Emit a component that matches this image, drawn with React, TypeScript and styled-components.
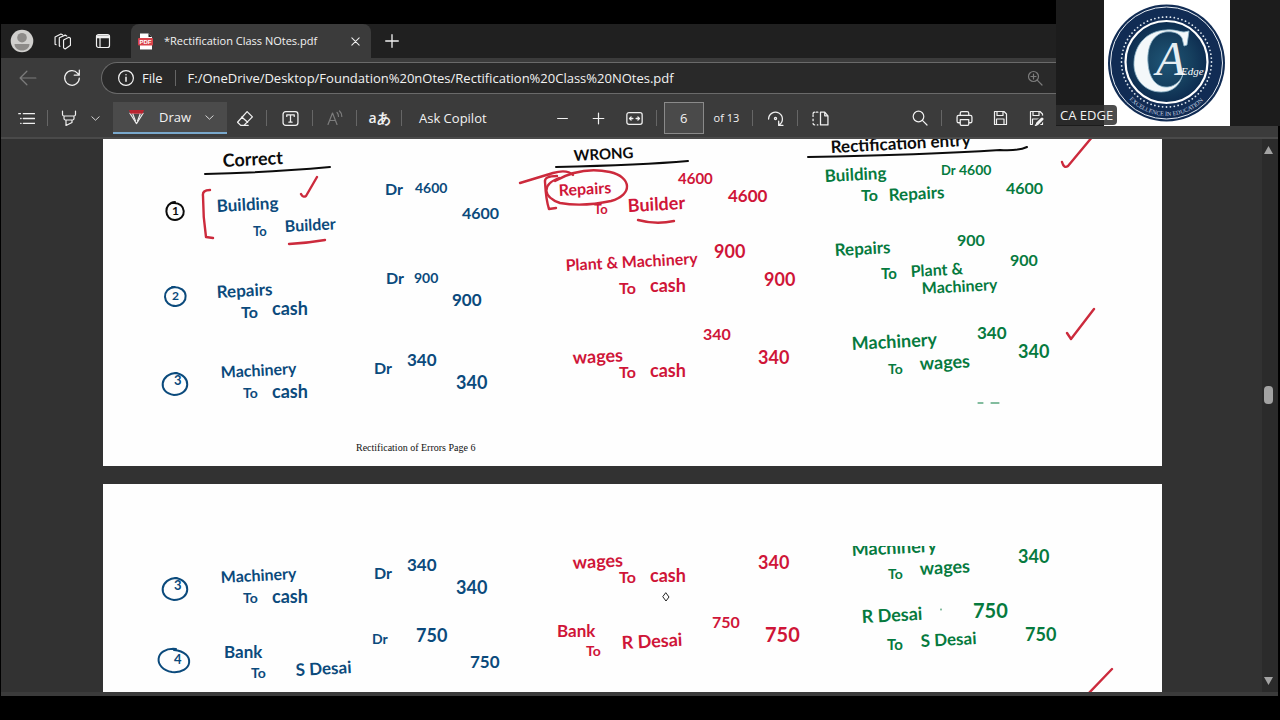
import React from "react";
import styled, { createGlobalStyle } from "styled-components";

const GlobalStyle = createGlobalStyle`
  * { box-sizing: border-box; }
  body {
    margin: 0;
    background: #000;
    color: #f2f2f2;
    font: 13px/20px "Open Sans", "Noto Sans", sans-serif;
  }
  button, input { font: inherit; color: inherit; }
  svg { flex: none; }
`;

const Screen = styled.div`
  position: relative;
  display: flex;
  flex-direction: column;
  height: 100vh;
  padding: 24px 2px 24px 1px;
  overflow: hidden;
`;

const TabBar = styled.header`
  display: flex;
  align-items: center;
  flex: none;
  height: 34px;
  background: #202020;
`;

const IconButton = styled.button<{ $w?: number; $dim?: boolean }>`
  display: flex;
  align-items: center;
  justify-content: center;
  flex: none;
  width: ${(p) => p.$w ?? 36}px;
  height: 32px;
  padding: 0;
  border: 0;
  background: none;
  color: ${(p) => (p.$dim ? "#7c7c7c" : "#f0f0f0")};
`;

const Tab = styled.div`
  display: flex;
  align-items: center;
  align-self: stretch;
  width: 240px;
  margin-left: 6px;
  padding-left: 6px;
  border-radius: 8px 8px 0 0;
  background: #3b3b3b;
`;

const TabTitle = styled.span`
  flex: 1;
  margin-left: 10px;
  font-size: 11px;
  white-space: nowrap;
`;

const AddressBar = styled.div`
  display: flex;
  align-items: center;
  flex: none;
  height: 40px;
  padding-left: 9px;
  background: #3b3b3b;
`;

const AddressPill = styled.div`
  display: flex;
  align-items: center;
  flex: 1;
  height: 32px;
  margin-left: 4px;
  padding: 0 235px 0 16px;
  border: 1px solid #6a6a6a;
  border-right: 0;
  border-radius: 16px 0 0 16px;
  background: #292929;
`;

const Scheme = styled.label`
  margin: 0 9px 0 8px;
`;

const UrlInput = styled.input`
  flex: 1;
  min-width: 0;
  margin-left: 8px;
  padding: 0;
  border: 0;
  background: none;
  outline: 0;
`;

const Toolbar = styled.div`
  display: flex;
  align-items: center;
  flex: none;
  height: 41px;
  padding: 1px 224px 0 7px;
  border-bottom: 2px solid #4a4a4a;
  background: #3b3b3b;
`;

const Divider = styled.span`
  flex: none;
  width: 1px;
  height: 16px;
  margin: 0 4px 0 3px;
  background: #666;
`;

const Spacer = styled.span<{ $grow: number }>`
  flex: ${(p) => p.$grow} 1 0;
`;

const DrawButton = styled.button`
  display: flex;
  align-items: center;
  justify-content: space-between;
  flex: none;
  width: 114px;
  height: 32px;
  margin-left: 9px;
  padding: 0 13px 0 15px;
  border: 0;
  border-bottom: 2px solid #79a8cc;
  background: #4b4b4b;
`;

const TextButton = styled.button`
  flex: none;
  width: 97px;
  padding: 0 0 0 13px;
  border: 0;
  background: none;
  text-align: left;
  white-space: nowrap;
`;

const Translate = styled.span`
  font-size: 14px;
  font-weight: 600;
`;

const PageInput = styled.input`
  flex: none;
  width: 40px;
  height: 32px;
  margin-left: 3px;
  padding: 0;
  border: 1px solid #8a8a8a;
  background: #4a4a4a;
  text-align: center;
`;

const PageCount = styled.label`
  flex: none;
  width: 45px;
  padding-left: 10px;
  font-size: 11px;
  white-space: nowrap;
`;

const Body = styled.main`
  display: flex;
  flex: 1;
  min-height: 0;
  border-bottom: 4px solid #3b3b3b;
`;

const Viewer = styled.div`
  flex: 1;
  min-width: 0;
  padding-left: 2px;
  overflow: hidden;
  background: #323232;
`;

const Sheet = styled.section`
  max-width: 1059px;
  margin: 0 auto 18px;
  background: #fefefe;
`;

const InkCanvas = styled.svg`
  display: block;
  width: 100%;
  height: auto;
  font-family: Lato, sans-serif;
  font-weight: 700;
`;

const SheetFooter = styled.footer`
  padding: 1px 0 10px 253px;
  color: #111;
  font: 10px/16px "Liberation Serif", serif;
`;

const ScrollTrack = styled.div`
  display: flex;
  flex-direction: column;
  align-items: center;
  justify-content: space-between;
  flex: none;
  width: 16px;
  padding: 7px 4px 7px 0;
  background: #2b2b2b;
`;

const ScrollThumb = styled.span`
  width: 9px;
  height: 18px;
  margin-bottom: 42px;
  border-radius: 4px;
  background: #a3a3a3;
`;

const Webcam = styled.aside`
  position: absolute;
  top: 0;
  right: 0;
  width: 224px;
  height: 126px;
  padding-left: 48px;
  background: #1c1c1c;
`;

const CamName = styled.span`
  position: absolute;
  left: 0;
  bottom: 1px;
  padding: 0 4px;
  border-radius: 0 4px 4px 0;
  background: rgba(45, 45, 45, 0.85);
`;

type Tone = "blue" | "red" | "green" | "black";
const ink: Record<Tone, string> = {
  blue: "#0b4a7c",
  red: "#cf1538",
  green: "#067a3e",
  black: "#0c0c0c",
};
const markRed = "#cc2a3c";

type Word = [text: string, x: number, y: number, size: number, tone: Tone];

const firstSheet: Word[] = [
  ["Correct", 120, 28, 18, "black"],
  ["WRONG", 471, 22, 15, "black"],
  ["Rectification entry", 728, 14, 17, "black"],

  ["1", 69, 76, 12, "black"],
  ["Building", 114, 73, 17, "blue"],
  ["To", 150, 97, 13, "blue"],
  ["Builder", 182, 93, 16, "blue"],
  ["Dr", 282, 56, 16, "blue"],
  ["4600", 312, 54, 14, "blue"],
  ["4600", 359, 80, 16, "blue"],
  ["Repairs", 456, 57, 16, "red"],
  ["4600", 575, 45, 15, "red"],
  ["To", 491, 75, 13, "red"],
  ["Builder", 525, 73, 18, "red"],
  ["4600", 625, 63, 17, "red"],
  ["Building", 722, 43, 17, "green"],
  ["Dr", 838, 36, 13, "green"],
  ["4600", 856, 36, 14, "green"],
  ["To", 758, 62, 16, "green"],
  ["Repairs", 786, 62, 17, "green"],
  ["4600", 903, 55, 16, "green"],

  ["2", 69, 161, 12, "blue"],
  ["Repairs", 114, 159, 17, "blue"],
  ["To", 138, 179, 16, "blue"],
  ["cash", 169, 176, 18, "blue"],
  ["Dr", 283, 145, 16, "blue"],
  ["900", 311, 144, 14, "blue"],
  ["900", 349, 167, 17, "blue"],
  ["Plant & Machinery", 463, 132, 16, "red"],
  ["900", 611, 119, 18, "red"],
  ["To", 516, 155, 16, "red"],
  ["cash", 547, 153, 18, "red"],
  ["900", 661, 147, 18, "red"],
  ["Repairs", 732, 117, 17, "green"],
  ["900", 854, 107, 16, "green"],
  ["To", 778, 140, 15, "green"],
  ["Plant &", 808, 138, 16, "green"],
  ["900", 907, 127, 16, "green"],
  ["Machinery", 819, 155, 16, "green"],

  ["3", 71, 246, 13, "blue"],
  ["Machinery", 118, 239, 16, "blue"],
  ["To", 140, 259, 14, "blue"],
  ["cash", 169, 259, 18, "blue"],
  ["Dr", 271, 235, 16, "blue"],
  ["340", 304, 227, 17, "blue"],
  ["340", 353, 250, 18, "blue"],
  ["wages", 470, 225, 18, "red"],
  ["To", 516, 239, 16, "red"],
  ["cash", 547, 238, 18, "red"],
  ["340", 600, 201, 16, "red"],
  ["340", 655, 225, 18, "red"],
  ["Machinery", 749, 211, 18, "green"],
  ["340", 874, 200, 17, "green"],
  ["To", 785, 235, 14, "green"],
  ["wages", 817, 231, 18, "green"],
  ["340", 915, 219, 18, "green"],
];

const secondSheet: Word[] = [
  ["3", 71, 106, 13, "blue"],
  ["Machinery", 118, 99, 16, "blue"],
  ["To", 140, 119, 14, "blue"],
  ["cash", 169, 119, 18, "blue"],
  ["Dr", 271, 95, 16, "blue"],
  ["340", 304, 87, 17, "blue"],
  ["340", 353, 110, 18, "blue"],
  ["wages", 470, 85, 18, "red"],
  ["To", 516, 99, 16, "red"],
  ["cash", 547, 98, 18, "red"],
  ["340", 655, 85, 18, "red"],
  ["To", 785, 95, 14, "green"],
  ["wages", 817, 91, 18, "green"],
  ["340", 915, 79, 18, "green"],

  ["4", 71, 180, 13, "blue"],
  ["Bank", 121, 174, 17, "blue"],
  ["To", 148, 194, 14, "blue"],
  ["S Desai", 193, 192, 17, "blue"],
  ["Dr", 269, 160, 14, "blue"],
  ["750", 313, 158, 18, "blue"],
  ["750", 367, 184, 17, "blue"],
  ["Bank", 454, 153, 17, "red"],
  ["To", 483, 172, 14, "red"],
  ["R Desai", 519, 165, 18, "red"],
  ["750", 609, 144, 16, "red"],
  ["750", 662, 158, 20, "red"],
  ["R Desai", 759, 139, 18, "green"],
  ["750", 870, 134, 20, "green"],
  ["To", 784, 166, 15, "green"],
  ["S Desai", 818, 163, 17, "green"],
  ["750", 922, 157, 18, "green"],
];

const Writing = ({ words }: { words: Word[] }) => (
  <g>
    {words.map(([text, x, y, size, tone], i) => (
      <text
        key={i}
        x={x}
        y={y}
        fontSize={size}
        fill={ink[tone]}
        transform={text.length > 4 ? `rotate(-3 ${x} ${y})` : undefined}
      >
        {text}
      </text>
    ))}
  </g>
);

const Svg = ({ size = 16, sw = 1.2, children }: { size?: number; sw?: number; children: React.ReactNode }) => (
  <svg width={size} height={size} viewBox="0 0 16 16" fill="none" stroke="currentColor" strokeWidth={sw} strokeLinecap="round" strokeLinejoin="round" aria-hidden="true">
    {children}
  </svg>
);

const Chevron = () => (
  <Svg size={9} sw={1.5}><path d="M1.500 5L8 11l6.500-6" /></Svg>
);

const Avatar = () => (
  <svg width="24" height="24" viewBox="0 0 24 24" aria-hidden="true">
    <circle cx="12" cy="12" r="11.3" fill="#d0cfcd" />
    <circle cx="12" cy="8.7" r="4.8" fill="#8d8b89" />
    <path d="M4.500 15h15c0 4-3.500 6.500-7.500 6.500S4.500 19 4.500 15z" fill="#8d8b89" />
  </svg>
);

const PdfIcon = () => (
  <svg width="17" height="17" viewBox="0 0 17 17" aria-hidden="true">
    <path d="M3 .5h8.500L15 4v12.500H3z" fill="#fff" />
    <path d="M11.500.5V4H15z" fill="#222" />
    <rect x="1" y="5" width="15" height="7.500" rx="1" fill="#d9434b" />
    <text x="8.500" y="11" fontSize="6" fontWeight="700" textAnchor="middle" fill="#fff" fontFamily="Liberation Sans, sans-serif">PDF</text>
  </svg>
);

const dots = Array.from({ length: 72 }, (_, i) => (i * Math.PI * 2) / 72);

const Logo = () => (
  <svg width="126" height="126" viewBox="0 0 126 126" role="img" aria-label="CA Edge, Excellence in Education">
    <defs>
      <radialGradient id="disc">
        <stop offset="0" stopColor="#1f5576" />
        <stop offset="0.6" stopColor="#16405f" />
        <stop offset="1" stopColor="#0d2c50" />
      </radialGradient>
      <path id="motto" d="M19.500 91.500A51 51 0 0 0 105.500 93" />
    </defs>
    <rect width="126" height="126" fill="#fff" />
    <circle cx="62.500" cy="63" r="58.500" fill="#112c54" />
    <circle cx="62.500" cy="63" r="56" fill="none" stroke="#e8eef5" strokeWidth="1" />
    {dots.map((a) => (
      <circle key={a} cx={62.5 + 45 * Math.cos(a)} cy={62 + 45 * Math.sin(a)} r="0.9" fill="#dfe8f0" />
    ))}
    <circle cx="62.500" cy="62" r="41" fill="url(#disc)" stroke="#fff" strokeWidth="2.200" />
    <path
      d="M80 46L78 38C75 33 69 31 61 32 47 35 43 49 44 63 45 79 53 88 64 87 72 86 77 80 79 74 76 86 68 92 57 92 41 92 29 79 30 62 31 44 43 31 62 30 70 29 76 32 80 32L85 31 83 45z"
      fill="#f4f8fa"
      stroke="#8db4c8"
      strokeWidth=".8"
    />
    <g fill="#fff" fontFamily="Liberation Serif, serif">
      <text x="52" y="75" fontSize="48" fontStyle="italic" fill="#e6eef2">A</text>
      <text x="77" y="75" fontSize="11" fontStyle="italic">Edge</text>
      <text fontSize="6" fill="#cbd8e6">
        <textPath href="#motto" startOffset="50%" textAnchor="middle">EXCELLENCE IN EDUCATION</textPath>
      </text>
    </g>
  </svg>
);

const Floppy = () => (
  <path d="M2.500 1.500h9.500l2.500 2.500v10.500h-12zM5 1.500v4h6v-4M4.500 14.500V9h7.500v5.500" />
);

export default function App() {
  return (
    <>
      <GlobalStyle />
      <Screen>
        <TabBar>
          <IconButton $w={42} aria-label="Profile"><Avatar /></IconButton>
          <IconButton $w={38} aria-label="Workspaces">
            <Svg size={17} sw={1.1}>
              <path d="M9 6.500l5-2.500 1.500 1v6.500l-5 3.500L9 14zM5.500 12.500L5 12V4.500L10.500 2l1.500.8M2 11l-1-.5V3.800L6.500 1 8 1.700" />
            </Svg>
          </IconButton>
          <IconButton $w={44} aria-label="Tab actions">
            <Svg><rect x="1.500" y="1.500" width="13" height="13" rx="2" /><path d="M2 3h12M2 4.500h12" strokeWidth="1.600" /><path d="M5 5v9.500" /></Svg>
          </IconButton>
          <Tab>
            <PdfIcon />
            <TabTitle>*Rectification Class NOtes.pdf</TabTitle>
            <IconButton $w={32} aria-label="Close tab">
              <Svg size={9} sw={1.8}><path d="M1.500 1.500l13 13M14.500 1.500l-13 13" /></Svg>
            </IconButton>
          </Tab>
          <IconButton $w={42} aria-label="New tab">
            <Svg size={14} sw={1.5}><path d="M8 .8v14.400M.8 8h14.400" /></Svg>
          </IconButton>
        </TabBar>

        <AddressBar>
          <IconButton aria-label="Back" $dim>
            <Svg size={18} sw={1.1}><path d="M15 8H1M7 2L1 8l6 6" /></Svg>
          </IconButton>
          <IconButton $w={51} aria-label="Reload">
            <Svg size={18} sw={1.1}><path d="M14.500 8A6.500 6.500 0 1 1 13 3.800l1.500 1.700M14.500 1v4.500H10" /></Svg>
          </IconButton>
          <AddressPill>
            <Svg><circle cx="8" cy="8" r="7.400" /><path d="M8 7.300v4M8 4.700v.1" strokeWidth="1.500" /></Svg>
            <Scheme htmlFor="url">File</Scheme>
            <Divider />
            <UrlInput id="url" readOnly value="F:/OneDrive/Desktop/Foundation%20nOtes/Rectification%20Class%20NOtes.pdf" />
            <IconButton $w={16} $dim aria-label="Zoom">
              <Svg><circle cx="6.500" cy="6.500" r="5" /><path d="M10.200 10.200L15 15M6.500 4v5M4 6.500h5" /></Svg>
            </IconButton>
          </AddressPill>
        </AddressBar>

        <Toolbar>
          <IconButton aria-label="Table of contents">
            <Svg size={17}><path d="M5 3.500h10.500M5 8h10.500M5 12.500h10.500M.7 3.500h1.600M2.500 8h.4M2.500 12.500h.4" /></Svg>
          </IconButton>
          <Divider />
          <IconButton $w={34} aria-label="Highlight">
            <Svg><path d="M1.500 1v3.500q0 1.500 1.500 1.500h10q1.500 0 1.500-1.500V1M3 6v2.500q0 1.500 1.500 1.500h7q1.500 0 1.500-1.500V6M5 10v5.500l6-3V10" /></Svg>
          </IconButton>
          <IconButton $w={18} aria-label="Highlight options"><Chevron /></IconButton>
          <DrawButton>
            <svg width="17" height="16" viewBox="0 0 18 16" fill="none" stroke="#eee" strokeWidth="1.200" strokeLinejoin="round" aria-hidden="true">
              <path d="M2 4h14L9 15z" />
              <path d="M1 .5h16L15.500 4.500h-13z" fill="#b92530" stroke="none" />
              <path d="M5 4.500l3 8M13 4.500l-3 8" />
            </svg>
            Draw
            <Chevron />
          </DrawButton>
          <IconButton aria-label="Erase">
            <Svg size={17}><path d="M9.500 1.500l5 5-8 8h-3l-3-3zM4.500 6.500l5.500 5M6.500 14.500h4" /></Svg>
          </IconButton>
          <Divider />
          <IconButton $w={38} aria-label="Add text">
            <Svg size={17}><rect x="1" y="1.500" width="14" height="13" rx="2.500" /><path d="M4.500 6V4.500h7V6M8 4.500v7M6.500 11.500h3" /></Svg>
          </IconButton>
          <Divider />
          <IconButton aria-label="Read aloud" $dim>
            <Svg><path d="M1 14.500L5.500 3 10 14.500M2.700 10.500h5.700M10 2.500q1.500 1.500 1.500 4M12.500 1q2.300 2 2.300 5.500" /></Svg>
          </IconButton>
          <Divider />
          <IconButton $w={37} aria-label="Translate"><Translate lang="ja">aあ</Translate></IconButton>
          <Divider />
          <TextButton>Ask Copilot</TextButton>
          <Spacer $grow={2} />
          <IconButton aria-label="Zoom out"><Svg size={13} sw={1.5}><path d="M2 8h12" /></Svg></IconButton>
          <IconButton aria-label="Zoom in"><Svg size={13} sw={1.5}><path d="M8 1.500v13M1.500 8h13" /></Svg></IconButton>
          <IconButton aria-label="Fit to width">
            <Svg size={17}><rect x=".8" y="2.500" width="14.400" height="11" rx="2" /><path d="M3.500 8h3M9.500 8h3M4.800 6.500L3.300 8l1.500 1.500M11.200 6.500L12.700 8l-1.500 1.500" /></Svg>
          </IconButton>
          <Divider />
          <PageInput id="page" readOnly value="6" />
          <PageCount htmlFor="page">of 13</PageCount>
          <Divider />
          <IconButton $w={37} aria-label="Rotate">
            <Svg size={17}><path d="M1.500 8.500A6.500 6.500 0 1 1 11.500 14M11 10.500V14.500h4" /><circle cx="8" cy="8" r="1" /></Svg>
          </IconButton>
          <Divider />
          <IconButton $w={38} aria-label="Page view">
            <Svg size={17}><path d="M8 2h4l3 3.500V14H8zM12 2v3.500h3M5.500 2H4M1 4.500V6M1 8.500V10M1 12.500q0 1.500 1.500 1.500M5 14h.5M1 3.500Q1 2 2.500 2" /></Svg>
          </IconButton>
          <Spacer $grow={3} />
          <IconButton aria-label="Find"><Svg><circle cx="6.500" cy="6.500" r="5.300" /><path d="M10.400 10.400L15 15" /></Svg></IconButton>
          <Divider />
          <IconButton aria-label="Print">
            <Svg size={17}><path d="M4 5V3q0-1.500 1.500-1.500h5Q12 1.500 12 3v2M4 12H2.500Q1 12 1 10.500v-4Q1 5 2.500 5h11Q15 5 15 6.500v4q0 1.500-1.500 1.500H12M4 9h8v4.500q0 1-1 1H5q-1 0-1-1z" /></Svg>
          </IconButton>
          <IconButton aria-label="Save"><Svg><Floppy /></Svg></IconButton>
          <IconButton aria-label="Save as">
            <Svg><Floppy /><path d="M7.500 15.500l7-7" stroke="#3b3b3b" strokeWidth="5.500" /><path d="M9.500 13.500l4.500-4.500" strokeWidth="3" /><path d="M7.500 15.300l1.500-.6" strokeWidth="1.500" /></Svg>
          </IconButton>
        </Toolbar>

        <Body>
          <Viewer>
            <Sheet>
              <InkCanvas viewBox="0 0 1059 300">
                <Writing words={firstSheet} />
                <g fill="none" strokeLinecap="round" strokeLinejoin="round">
                  <g stroke={ink.black} strokeWidth="2">
                    <path d="M102 35Q160 34 227 28M453 28Q540 26 585 22M705 18Q820 16 897 11Q916 12 924 8" />
                    <path d="M72 63C60 64 61 81 72 81C84 81 84 63 70 64" />
                  </g>
                  <g stroke={ink.blue} strokeWidth="2">
                    <path d="M72 148C58 149 59 167 73 167C86 166 87 147 69 148" />
                    <path d="M74 234C57 234 54 254 71 256C88 256 89 236 72 234" />
                  </g>
                  <g stroke={markRed} strokeWidth="2.400">
                    <path d="M107 51Q99 51 100 57Q100 78 103 98L110 99M186 105Q205 104 222 101M198 55Q200 59 203 57L214 38" />
                    <path d="M417 44L450 34Q464 30 470 36M454 37Q441 37 442 43Q443 61 446 70L453 69M535 81Q553 86 571 82" />
                    <path d="M452 42Q478 27 507 33C529 38 530 56 508 62Q480 68 457 64C440 58 438 46 456 39" />
                    <path d="M959 23Q961 30 965 27L990 -3M964 194L968 200L991 170" />
                  </g>
                  <path d="M875 264h5M888 264h8" stroke={ink.green} />
                </g>
              </InkCanvas>
              <SheetFooter>Rectification of Errors Page 6</SheetFooter>
            </Sheet>
            <Sheet>
              <InkCanvas viewBox="0 0 1059 300">
                <clipPath id="carryOver"><rect x="740" y="62" width="120" height="20" /></clipPath>
                <g clipPath="url(#carryOver)">
                  <Writing words={[["Machinery", 749, 72, 18, "green"]]} />
                </g>
                <Writing words={secondSheet} />
                <g fill="none" strokeLinecap="round" strokeLinejoin="round">
                  <g stroke={ink.blue} strokeWidth="2">
                    <path d="M74 94C57 94 54 114 71 116C88 116 89 96 72 94" />
                    <path d="M73 165C51 163 50 185 69 188C90 190 93 168 71 166" />
                  </g>
                  <path d="M838 125v1" stroke={ink.green} />
                  <path d="M985 210l24-25" stroke={markRed} strokeWidth="2.400" />
                  <path d="M563 109l3 4-3 4-3-4z" stroke="#222" />
                </g>
              </InkCanvas>
            </Sheet>
          </Viewer>
          <ScrollTrack aria-hidden="true">
            <svg width="9" height="8"><path d="M4.500 0L9 8H0z" fill="#a3a3a3" /></svg>
            <ScrollThumb />
            <svg width="9" height="8"><path d="M4.500 8L9 0H0z" fill="#a3a3a3" /></svg>
          </ScrollTrack>
        </Body>

        <Webcam>
          <Logo />
          <CamName>CA EDGE</CamName>
        </Webcam>
      </Screen>
    </>
  );
}
